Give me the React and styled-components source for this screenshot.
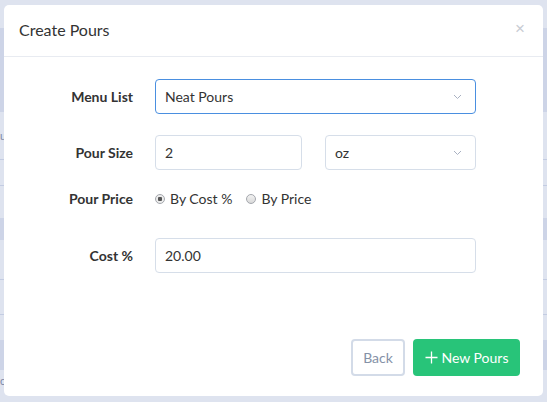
import styled, { createGlobalStyle } from 'styled-components';

const GlobalStyle = createGlobalStyle`
  * { box-sizing: border-box; }
  html, body { margin: 0; padding: 0; }
  body {
    width: 547px;
    height: 402px;
    overflow: hidden;
    background: #dee3ef;
    font-family: Lato, "Open Sans", "Liberation Sans", sans-serif;
  }
`;

// 뒤에 깔린 페이지 (흐리게)
const Backdrop = styled.div`
  position: relative;
  width: 547px;
  height: 402px;
  padding-top: 28px;
  display: flex;
  flex-direction: column;
`;

const BackBand = styled.div`
  height: ${(p) => p.$h}px;
  background: ${(p) => (p.$dark ? '#cdd4e7' : 'transparent')};
  border-bottom: ${(p) => (p.$line ? '1px solid #c3cce2' : 'none')};
  color: #7d8aa8;
  font-size: 11px;
  display: flex;
  align-items: center;
`;

// modal
const Modal = styled.div`
  position: absolute;
  top: 5px;
  left: 4px;
  width: 539px;
  height: 391px;
  background: #fff;
  border-radius: 5px;
  display: flex;
  flex-direction: column;
`;

const ModalHeader = styled.header`
  display: flex;
  height: 52px;
  padding: 0 15px;
  justify-content: space-between;
  align-items: center;
  border-bottom: 1px solid #e8ebf1;
`;

const ModalTitle = styled.h2`
  margin: 0 0 2px;
  font-size: 16px;
  font-weight: 400;
  color: #333;
`;

const CloseButton = styled.button`
  border: none;
  background: none;
  padding: 0 3px 4px;
  font-size: 17px;
  line-height: 1;
  color: #c8ccd3;
  cursor: pointer;
`;

const ModalBody = styled.div`
  flex: 1;
  display: flex;
  flex-direction: column;
  gap: 21px;
  padding: 22px 67px 0 23px;
`;

const Row = styled.div`
  display: flex;
  align-items: ${(p) => (p.$top ? 'flex-start' : 'center')};
  gap: 22px;
  height: ${(p) => p.$h || 35}px;
`;

const Label = styled.label`
  width: 106px;
  flex-shrink: 0;
  text-align: right;
  font-size: 14px;
  font-weight: 700;
  color: #333;
  line-height: 16px;
`;

const Fields = styled.div`
  flex: 1;
  display: flex;
  gap: 23px;
  height: 100%;
  align-items: ${(p) => (p.$top ? 'flex-start' : 'stretch')};
`;

const TextBox = styled.div`
  flex: 1;
  display: flex;
  align-items: center;
  justify-content: space-between;
  padding: 0 ${(p) => (p.$select ? '13px' : '9px')} 0 9px;
  border: 1px solid ${(p) => (p.$focus ? '#4a8fe0' : '#d6dee9')};
  border-radius: 4px;
  font-size: 14px;
  color: #333;
  background: #fff;
`;

const Chevron = () => (
  <svg width="9" height="6" viewBox="0 0 9 6" fill="none">
    <path d="M1 1l3.5 3.5L8 1" stroke="#a9b1c2" strokeWidth="1" />
  </svg>
);

const RadioGroup = styled.div`
  display: flex;
  align-items: center;
  gap: 14px;
  line-height: 16px;
`;

const RadioOption = styled.span`
  display: flex;
  align-items: center;
  gap: 5px;
  font-size: 14px;
  color: #333;
`;

const RadioDot = styled.span`
  width: 10px;
  height: 10px;
  border-radius: 50%;
  border: 1px solid #a4a7ad;
  background: ${(p) =>
    p.$checked
      ? 'radial-gradient(circle, #555 0 2px, #ececec 2.5px)'
      : 'linear-gradient(#f2f2f2, #d9d9d9)'};
`;

const ModalFooter = styled.footer`
  display: flex;
  justify-content: flex-end;
  gap: 8px;
  padding: 0 23px 20px 0;
`;

const BackButton = styled.button`
  width: 54px;
  height: 37px;
  border: 2px solid #d3dbe8;
  border-radius: 4px;
  background: #fff;
  color: #8591a7;
  font-family: inherit;
  font-size: 14px;
`;

const PrimaryButton = styled.button`
  display: flex;
  align-items: center;
  justify-content: center;
  gap: 4px;
  width: 107px;
  height: 37px;
  border: none;
  border-radius: 4px;
  background: #28c479;
  color: #fff;
  font-family: inherit;
  font-size: 14px;
`;

const PlusIcon = () => (
  <svg width="13" height="13" viewBox="0 0 13 13">
    <path d="M6.5 0.5v12M0.5 6.5h12" stroke="#fff" strokeWidth="1.3" />
  </svg>
);

export default function App() {
  return (
    <>
      <GlobalStyle />
      <Backdrop>
        <BackBand $h={84} $dark />
        <BackBand $h={48} $line>u</BackBand>
        <BackBand $h={26} $line />
        <BackBand $h={32} />
        <BackBand $h={22} $dark />
        <BackBand $h={40} $line />
        <BackBand $h={35} $line />
        <BackBand $h={25} />
        <BackBand $h={30} $dark />
        <BackBand $h={20}>c</BackBand>

        <Modal>
          <ModalHeader>
            <ModalTitle>Create Pours</ModalTitle>
            <CloseButton>×</CloseButton>
          </ModalHeader>

          <ModalBody>
            <Row>
              <Label>Menu List</Label>
              <Fields>
                <TextBox $select $focus>
                  Neat Pours
                  <Chevron />
                </TextBox>
              </Fields>
            </Row>

            <Row>
              <Label>Pour Size</Label>
              <Fields>
                <TextBox>2</TextBox>
                <TextBox $select>
                  oz
                  <Chevron />
                </TextBox>
              </Fields>
            </Row>

            <Row $top $h={26}>
              <Label>Pour Price</Label>
              <Fields $top>
                <RadioGroup>
                  <RadioOption>
                    <RadioDot $checked />
                    By Cost %
                  </RadioOption>
                  <RadioOption>
                    <RadioDot />
                    By Price
                  </RadioOption>
                </RadioGroup>
              </Fields>
            </Row>

            <Row>
              <Label>Cost %</Label>
              <Fields>
                <TextBox>20.00</TextBox>
              </Fields>
            </Row>
          </ModalBody>

          <ModalFooter>
            <BackButton>Back</BackButton>
            <PrimaryButton>
              <PlusIcon />
              New Pours
            </PrimaryButton>
          </ModalFooter>
        </Modal>
      </Backdrop>
    </>
  );
}
